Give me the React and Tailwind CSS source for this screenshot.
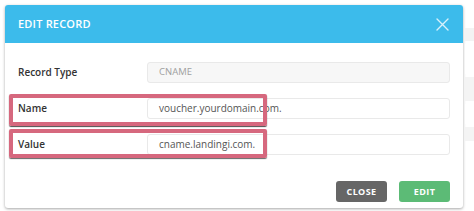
import React from "react";

function Row({ label, value, muted }) {
  return (
    <div className="flex items-center h-[21px]">
      <div className="w-[129px] shrink-0 text-[10px] font-semibold text-[#333]">{label}</div>
      <div
        className={
          "flex-1 h-[21px] flex items-center pl-[11px] rounded-[3px] border border-[#e9e9e9] " +
          (muted ? "bg-[#f7f7f7] text-[#a0a0a0] text-[9.5px]" : "bg-white text-[#555] text-[10px]")
        }
      >
        {value}
      </div>
    </div>
  );
}

export default function App() {
  return (
    <div
      className="relative w-[474px] h-[211px] bg-white overflow-hidden flex"
      style={{ fontFamily: '"Open Sans", "Liberation Sans", sans-serif' }}
    >
      <div className="pl-[5px] pt-[5px] shrink-0">
        <div className="w-[458px] h-[203px] bg-white rounded-[3px] shadow-[0_1px_3px_rgba(0,0,0,0.35)] flex flex-col">
          <div className="h-[38px] bg-[#3cbbeb] rounded-t-[3px] flex items-center justify-between pl-[13px] pr-[14px]">
            <span className="text-[11px] font-semibold text-white tracking-[0.2px]">EDIT RECORD</span>
            <svg width="13" height="13" viewBox="0 0 13 13" className="opacity-80">
              <path d="M1 1 L12 12 M12 1 L1 12" stroke="white" strokeWidth="1.4" strokeLinecap="round" />
            </svg>
          </div>
          <div className="flex flex-col pl-[13px] pr-[13px] pt-[19px] gap-[15px]">
            <Row label="Record Type" value="CNAME" muted />
            <Row label="Name" value="voucher.yourdomain.com." />
            <Row label="Value" value="cname.landingi.com." />
          </div>
          <div className="flex justify-end gap-[12px] pr-[13px] mt-[26px]">
            <button className="w-[51px] h-[21px] rounded-[3px] bg-[#666666] text-white text-[9px] font-bold tracking-[0.4px]">
              CLOSE
            </button>
            <button className="w-[51px] h-[21px] rounded-[3px] bg-[#5cbb76] text-white text-[9px] font-bold tracking-[0.4px]">
              EDIT
            </button>
          </div>
        </div>
      </div>
      <div className="flex-1 ml-[2px] flex flex-col pt-[28px] gap-[3px]">
        <div className="h-[13px] bg-[#f3f3f3]" />
        <div className="h-[30px] bg-white" />
        <div className="h-[24px] bg-[#f4f4f4]" />
        <div className="h-[20px] bg-white" />
        <div className="h-[14px] bg-[#f4f4f4]" />
      </div>
      <div className="absolute left-[9px] top-[94px] w-[258px] h-[32px] border-[4px] border-[#d6687e] rounded-[2px] shadow-[0_1px_1px_rgba(0,0,0,0.7)]" />
      <div className="absolute left-[9px] top-[129px] w-[258px] h-[29px] border-[4px] border-[#d6687e] rounded-[2px] shadow-[0_1px_1px_rgba(0,0,0,0.6)]" />
    </div>
  );
}
